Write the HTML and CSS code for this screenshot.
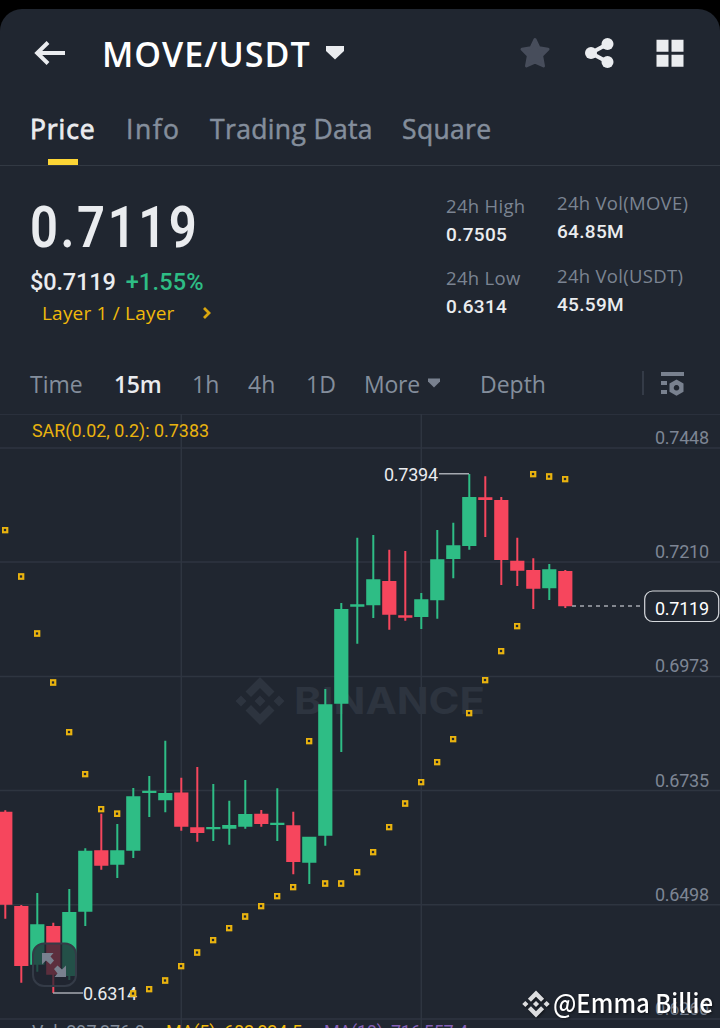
FILE: index.html
```html
<!DOCTYPE html>
<html lang="en">
<head>
<meta charset="utf-8">
<title>MOVE/USDT</title>
<link rel="stylesheet" href="styles.css">
</head>
<body>
<main class="screen">
  <header class="topbar">
    <svg class="back" width="32" height="26" viewBox="0 0 32 26"><path d="M31 13H4M14 2.5L3.2 13L14 23.500" fill="none" stroke="#eaecef" stroke-width="4"/></svg>
    <h1 class="pair">MOVE/USDT</h1>
    <svg class="caret" width="20" height="16" viewBox="0 0 20 16"><path d="M1 1H19V6L10 14.500L1 6Z" fill="#eaecef"/></svg>
    <svg class="star" width="32" height="32" viewBox="0 0 32 32"><path d="M16 2.500L20 10.800L29 12.200L22.600 18.600L24.500 29L16 25.200L7.500 29L9.400 18.600L3 12.200L12 10.800Z" fill="#474d5b" stroke="#474d5b" stroke-width="3" stroke-linejoin="round"/></svg>
    <svg class="share" width="32" height="32" viewBox="0 0 32 32"><g fill="#eaecef"><circle cx="8" cy="16" r="6"/><circle cx="24.500" cy="7" r="6"/><circle cx="24.500" cy="25" r="6"/></g><path d="M24.500 7L8 16L24.500 25" fill="none" stroke="#eaecef" stroke-width="4"/></svg>
    <svg class="apps" width="28" height="28" viewBox="0 0 28 28"><path d="M.5.7h12v12h-12zM15.500.7h12v12h-12zM.5 15.700h12v12h-12zM15.500 15.700h12v12h-12z" fill="#eaecef"/></svg>
  </header>
  <nav class="tabs">
    <span class="tab active">Price</span><span class="tab info">Info</span><span class="tab">Trading Data</span><span class="tab">Square</span>
  </nav>
  <section class="summary">
    <div class="quote">
      <div class="last">0.7119</div>
      <div class="change"><span class="fiat">$0.7119</span><span class="up">+1.55%</span></div>
      <div class="tag"><span>Layer 1 / Layer</span><svg width="10" height="14" viewBox="0 0 10 14"><path d="M2 2L7 7L2 12" fill="none" stroke="#d9a60e" stroke-width="2.800"/></svg></div>
    </div>
    <dl class="stats low">
      <dt>24h High</dt><dd>0.7505</dd>
      <dt>24h Low</dt><dd>0.6314</dd>
    </dl>
    <dl class="stats">
      <dt>24h Vol(MOVE)</dt><dd>64.85M</dd>
      <dt>24h Vol(USDT)</dt><dd>45.59M</dd>
    </dl>
  </section>
  <nav class="intervals">
    <span>Time</span><span class="selected">15m</span><span>1h</span><span>4h</span><span>1D</span>
    <span class="more">More<svg width="14" height="10" viewBox="0 0 14 10"><path d="M1 .5H13V3.500L7 9.500L1 3.500Z" fill="#79818f"/></svg></span>
    <span>Depth</span>
    <svg class="settings" width="44" height="28" viewBox="0 0 44 28"><path d="M1 1V25" stroke="#343b47" stroke-width="2"/><g fill="#79818f"><path d="M19 2h23v4h-23zM19 11h6v4h-6zM19 20h6v4h-6z"/><path fill-rule="evenodd" d="M34.500 9.500L41.500 13.500V21.800L34.500 25.800L27.500 21.800V13.500ZM34.500 15a2.800 2.800 0 1 0 .01 0Z"/></g></svg>
  </nav>
  <svg class="chart" width="720" height="614" viewBox="0 414 720 614">
    <defs>
      <marker id="sar" markerWidth="7" markerHeight="7" refX="3.500" refY="3.500" markerUnits="userSpaceOnUse"><rect x="1.250" y="1.250" width="4.500" height="4.500" fill="#202630" stroke="#e9b30f" stroke-width="2.200"/></marker>
      <g id="logo"><path d="M0-24L14.500-9.500L9-4L0-13L-9-4L-14.500-9.500ZM0 24L14.500 9.500L9 4L0 13L-9 4L-14.500 9.500ZM0-5.500L5.500 0L0 5.500L-5.500 0ZM-19-5.500L-13.500 0L-19 5.500L-24.500 0ZM19-5.500L24.500 0L19 5.500L13.500 0Z"/></g>
    </defs>
    <g class="grid"><path d="M0 414H720M0 448H720M0 562H720M0 676.500H720M0 790.500H720M0 904.800H720M0 1019H720" /><path d="M181.300 414V1028M421.300 414V1028"/></g>
    <g fill="#2d343f"><use href="#logo" x="260" y="701"/><text class="brand" x="294" y="714" textLength="191" lengthAdjust="spacingAndGlyphs">BINANCE</text></g>
    <g class="scale">
      <text x="655" y="444" textLength="54">0.7448</text><text x="655" y="558" textLength="54">0.7210</text><text x="655" y="672" textLength="54">0.6973</text><text x="655" y="787" textLength="54">0.6735</text><text x="655" y="901" textLength="54">0.6498</text><text x="655" y="1015" textLength="54">0.6260</text>
    </g>
    <text class="sar-label" x="32" y="437" textLength="177" lengthAdjust="spacingAndGlyphs">SAR(0.02, 0.2): 0.7383</text>
    <g transform="translate(.3 0)">
    <path class="wick up-line" d="M37 893V971.700M69 889V980M85 848.300V926M117 824V878M133 788V858M149 776V817M165 740.700V812.300M213 784V841M229 800.700V844.700M245 780V828.700M277 788.300V841M309 837V884M325 689V845.700M341 603V752M357 537.700V643.700M373 535V618M421 593V629M437 530V618.700M453 522.700V578.300M469 474V549.700M549 564V600"/>
    <path class="wick down-line" d="M5 810.300V918.700M21 905V982.700M53 922.700V993M101 813.700V869.700M181 777.700V830.700M197 767V841.700M261 810V826.700M293 811.700V874.300M389 549.700V629.700M405 551V620.700M485 476.300V537M501 497V585M517 537.700V586M533 558.300V609M565 570V608"/>
    <path class="candle up-line" d="M37 924.300V964.700M69 912V976M85 850.700V911.700M117 850.300V864.700M133 796.300V850.700M149 790.700V793M165 793V800.300M213 827V829.300M229 825V828.700M245 814V826.700M277 822.700V825M309 836.700V862.700M325 704.300V835.700M341 609V703.700M357 604.300V606.700M373 579.300V605.300M421 599.300V617M437 559.300V600.300M453 545.300V559M469 497V546M549 569.300V588.300"/>
    <path class="candle down-line" d="M5 811.700V904.700M21 906V966M53 926V974.700M101 850.300V865.700M181 792.500V826.700M197 827.300V833M261 813.700V824M293 825.300V862M389 581V614.700M405 615.300V617.700M485 497.300V500M501 500V560M517 560.700V570.700M533 570V588.700M565 571V606.300"/>
    </g>
    <rect x="33" y="943.500" width="43" height="42.500" rx="11" fill="#202630" fill-opacity=".72" stroke="#343b47" stroke-width="2"/>
    <path d="M42 953H53.500L50.500 956.500L54 960.500L50.500 964.500L46 960.500L42 964.500ZM66 977H54.500L57.500 973.500L54 969L57.500 965.500L62 969.500L66 965.500Z" fill="#79818f"/>
    <g class="extremes"><path d="M439 473.800H469M53 993H83"/><text x="384" y="481" textLength="54">0.7394</text><text x="83" y="1000" textLength="54">0.6314</text></g>
    <polyline class="sar" points="5,530 21,576.500 37,633.500 53,682.500 69,732 85,774 101,809 117,813.700 133,993.500 149,989 165,980.500 181,966 197,952.500 213,940 229,928 245,916.500 261,906 277,896 293,887 309,741 325,883.500 341,883.500 357,872 373,852 389,827 405,803.500 421,782 437,762 453,739 469,713 485,680 501,651 517,626 533,474 549,476.500 565,479"/>
    <path d="M572 606H642" stroke="#a5a9b0" stroke-width="1.500" stroke-dasharray="4 4"/>
    <rect x="644.700" y="591" width="74" height="30.500" rx="8" fill="#202630" stroke="#d5d8dc" stroke-width="1.200"/>
    <text class="current" x="655" y="615" textLength="54">0.7119</text>
    <g class="volume"><text x="32" y="1038" textLength="113" fill="#848e9c">Vol: 297,376.9</text><text x="166" y="1038" textLength="136" fill="#f0b90b">MA(5): 602,834.5</text><text x="324" y="1038" textLength="144" fill="#8560b5">MA(10): 716,557.4</text></g>
    <g class="author"><use href="#logo" fill="#dcdddf" transform="translate(536 1004) scale(.56)"/><text x="553" y="1013" textLength="160" lengthAdjust="spacingAndGlyphs">@Emma Billie</text></g>
  </svg>
</main>
</body>
</html>
```
FILE: styles.css
```css
* { box-sizing: border-box; }
html, body { margin: 0; background: #000; }
body { width: 720px; height: 1028px; padding-top: 9px; overflow: hidden; font-family: "Open Sans", sans-serif; color: #eaecef; }
.screen { height: 1019px; overflow: hidden; border-radius: 22px 22px 0 0; background: #202630; }
svg { display: block; flex: none; }

.topbar { display: flex; align-items: center; height: 88px; padding: 0 36px 0 34px; }
.pair { width: 222px; margin: 2px 0 0 36px; font: 600 34px/44px "Open Sans", sans-serif; letter-spacing: 1px; color: #fff; white-space: nowrap; }
.caret { margin: -1px 0 0 1px; }
.star { margin-left: auto; }
.share { margin-left: 32px; }
.apps { margin-left: 41px; }

.tabs { display: grid; grid-template-columns: 96px 84px 192px 1fr; height: 69px; padding: 10px 0 0 30px; border-bottom: 1px solid #323943; font-size: 26.500px; line-height: 44px; letter-spacing: 0.350px; color: #848e9c; white-space: nowrap; -webkit-text-stroke: 0.500px currentColor; }
.active { position: relative; color: #eaecef; letter-spacing: 0.900px; -webkit-text-stroke-width: 0.800px; }
.info { letter-spacing: 1.500px; }
.active::after { content: ""; position: absolute; left: 18px; bottom: 0; width: 30px; height: 6px; background: #fcd535; }

.summary { display: grid; grid-template-columns: 416px 111px 1fr; height: 194px; padding-left: 30px; white-space: nowrap; }
.quote { padding-top: 30px; font-family: Roboto, sans-serif; }
.last { height: 64px; font-size: 57px; line-height: 64px; font-weight: 600; letter-spacing: 3px; transform: scaleX(0.860); transform-origin: 0 50%; }
.change { display: flex; gap: 10px; height: 36px; margin-top: 4px; font-size: 23.500px; font-weight: 500; line-height: 36px; }
.up { color: #2ebd85; }
.fiat { letter-spacing: -0.150px; }
.up { letter-spacing: 0.200px; }
.tag { display: flex; align-items: center; gap: 27px; padding-left: 12px; height: 26px; font: 400 19px/26px "Open Sans", sans-serif; letter-spacing: 0.200px; color: #f0b90b; }
.stats { margin: 0; padding-top: 23px; }
.low { padding-top: 26px; }
.stats dt { height: 28px; font-size: 18.500px; line-height: 28px; letter-spacing: 0.300px; color: #7b8492; }
.stats dd { height: 45px; margin: 0; font: 500 19px/29px Roboto, sans-serif; letter-spacing: 0.300px; }
.low dd { height: 44px; }

.intervals { display: grid; grid-template-columns: 84px 78px 56px 58px 58px 116px 162px 44px; height: 54px; padding-left: 30px; font-size: 23px; line-height: 48px; color: #848e9c; }
.selected { color: #eaecef; font-weight: 600; letter-spacing: -0.300px; }
.more { display: flex; gap: 7px; letter-spacing: -0.200px; }
.more svg { margin-top: 18px; }
.settings { margin-top: 10px; }

.chart { font-family: Roboto, sans-serif; }
.grid { fill: none; stroke: #2e3540; stroke-width: 1.500; }
.brand { font: 700 37px Inter, sans-serif; }
.scale { font-size: 18px; fill: #7d8594; }
.sar-label { font-size: 18px; fill: #e9b30f; }
.wick { fill: none; stroke-width: 2; }
.candle { fill: none; stroke-width: 14.200; }
.up-line { stroke: #2ebd85; }
.down-line { stroke: #f6465d; }
.extremes { font-size: 18px; fill: #eaecef; stroke: none; }
.extremes path { stroke: #a5a9b0; stroke-width: 1.500; }
.sar { fill: none; stroke: none; marker: url(#sar); }
.current { font-size: 18px; fill: #fff; }
.volume { font-size: 18px; }
.author { font: 500 26px "Noto Sans CJK SC", sans-serif; fill: #fff; filter: drop-shadow(1px 1px 1px #0008); }
```
